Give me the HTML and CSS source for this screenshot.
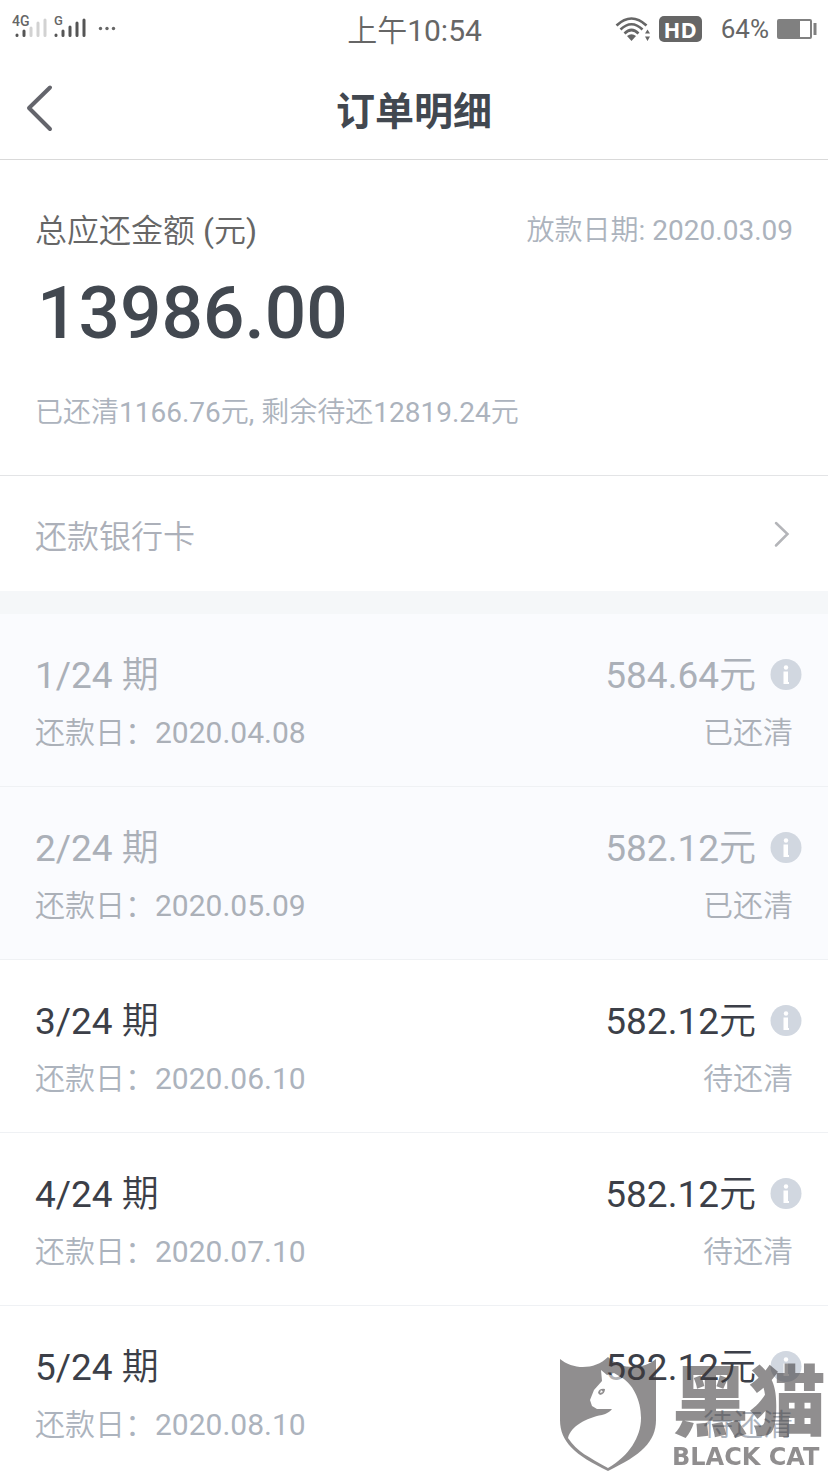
FILE: index.html
```html
<!DOCTYPE html>
<html lang="zh-CN">
<head>
<meta charset="utf-8">
<meta name="viewport" content="width=device-width, initial-scale=1">
<title>订单明细</title>
<link rel="stylesheet" href="styles.css">
</head>
<body>
<svg class="defs" aria-hidden="true">
  <symbol id="info" viewBox="0 0 32 32">
    <circle cx="16" cy="15.500" r="15.5" fill="#d1d7e0"/>
    <circle cx="16" cy="8.500" r="2.200" fill="#fff"/>
    <path d="M13.500 12.500H18V23H19V25H13.500Z" fill="#fff"/>
  </symbol>
</svg>
<div class="app">
  <div class="status">
    <div class="status-left">
      <svg width="106" height="30" viewBox="0 0 106 30" aria-label="信号">
        <g font-family="Roboto, sans-serif" font-size="14" font-weight="500" fill="#666">
          <text x="0" y="12">4G</text>
          <text x="42" y="11" font-size="13">G</text>
        </g>
        <g stroke-width="3" stroke-linecap="round" stroke="#555">
          <path d="M5 21V21.500M12 17V21.500"/>
          <path d="M19 14V21.500M26 9V21.500M33 6V21.500" stroke="#d2d2d2"/>
          <path d="M44 21V21.500M51 17V21.500M58 13V21.500M65 9V21.500M72 6V21.500"/>
        </g>
        <g fill="#666"><circle cx="88.500" cy="14.500" r="1.700"/><circle cx="95" cy="14.500" r="1.700"/><circle cx="101.500" cy="14.500" r="1.700"/></g>
      </svg>
    </div>
    <time class="clock">上午10:54</time>
    <div class="status-right">
      <svg width="36" height="26" viewBox="0 0 36 26" aria-label="无线网络">
        <g fill="none" stroke="#666" stroke-width="2.600">
          <path d="M1.500 9.500Q16.500 -4.500 31.500 9.500"/>
          <path d="M5.500 13.500Q16.500 3 27.500 13.500"/>
          <path d="M9.500 17.500Q16.500 10.500 23.500 17.500"/>
        </g>
        <path d="M12 20Q16.500 16.500 21 20L16.500 25Z" fill="#666"/>
        <path d="M30 17.500L32.500 13.500L35 17.500ZM30 20.500L32.500 25L35 20.500Z" fill="#666"/>
      </svg>
      <span class="hd">HD</span>
      <span class="percent">64%</span>
      <svg width="40" height="20" viewBox="0 0 40 20" aria-label="电量">
        <rect x="1" y="1" width="33" height="18" rx="1" fill="#fff" stroke="#808080" stroke-width="2"/>
        <path d="M1 1H23V19H1ZM36.500 4H39.500V16H36.500Z" fill="#808080"/>
      </svg>
    </div>
  </div>

  <header class="nav">
    <button class="back" type="button" aria-label="返回">
      <svg width="30" height="50" viewBox="0 0 30 50"><path d="M26 4.500L5 25L26 46" fill="none" stroke="#64656c" stroke-width="4" stroke-linecap="round" stroke-linejoin="round"/></svg>
    </button>
    <h1>订单明细</h1>
  </header>

  <main class="content">
    <section class="summary">
      <div class="summary-top">
        <span class="label">总应还金额 (元)</span>
        <span class="loan-date">放款日期: 2020.03.09</span>
      </div>
      <div class="total">13986.00</div>
      <p class="progress">已还清1166.76元, 剩余待还12819.24元</p>
    </section>

    <a class="bank" href="#bank">
      <span>还款银行卡</span>
      <svg width="16" height="28" viewBox="0 0 16 28"><path d="M2 3L13.500 14L2 25.500" fill="none" stroke="#b4b5b9" stroke-width="2.500" stroke-linecap="round"/></svg>
    </a>

    <ul class="plan">
      <li class="term paid">
        <div class="line main"><span>1/24 期</span><span class="amount">584.64元<button type="button" aria-label="第1期说明"><svg><use href="#info"/></svg></button></span></div>
        <div class="line sub"><span>还款日：2020.04.08</span><span>已还清</span></div>
      </li>
      <li class="term paid">
        <div class="line main"><span>2/24 期</span><span class="amount">582.12元<button type="button" aria-label="第2期说明"><svg><use href="#info"/></svg></button></span></div>
        <div class="line sub"><span>还款日：2020.05.09</span><span>已还清</span></div>
      </li>
      <li class="term">
        <div class="line main"><span>3/24 期</span><span class="amount">582.12元<button type="button" aria-label="第3期说明"><svg><use href="#info"/></svg></button></span></div>
        <div class="line sub"><span>还款日：2020.06.10</span><span>待还清</span></div>
      </li>
      <li class="term">
        <div class="line main"><span>4/24 期</span><span class="amount">582.12元<button type="button" aria-label="第4期说明"><svg><use href="#info"/></svg></button></span></div>
        <div class="line sub"><span>还款日：2020.07.10</span><span>待还清</span></div>
      </li>
      <li class="term">
        <div class="line main"><span>5/24 期</span><span class="amount">582.12元<button type="button" aria-label="第5期说明"><svg><use href="#info"/></svg></button></span></div>
        <div class="line sub"><span>还款日：2020.08.10</span><span>待还清</span></div>
      </li>
    </ul>
  </main>
</div>

<div class="watermark">
  <svg width="98" height="114" viewBox="0 0 98 114" aria-hidden="true">
    <path class="cat" d="M42 26L44 13L51 18L60 19C74 28 82 43 82 61C82 80 70 99 49 109C30 98 18 93 9 80C12 67 27 61 43 58Q50 56 53 51H37L32 48L30 43L36 32Z"/>
    <path class="shield" fill-rule="evenodd" d="M1 2C14 13 36 13 49 0C62 13 84 13 97 2V63C97 85 82 98 49 114C16 98 1 85 1 63ZM43 24L35 33L31 43L33 49L38 52H53Q50 56 43 58C27 61 12 69 9 81C18 95 30 100 49 111C70 99 82 80 82 61C82 43 74 26 60 19L55 16L48 18L42 13Z"/>
    <path class="shield" fill-rule="evenodd" d="M39 36Q40 31 46 32Q46 37 41 38ZM42 33L41 36L44 35Z"/>
  </svg>
  <div class="brand"><span class="brand-cn">黑猫</span><span class="brand-en">BLACK CAT</span></div>
</div>
</body>
</html>
```

FILE: styles.css
```css
* { box-sizing: border-box; }

body {
  margin: 0;
  background: #fff;
  color: #3c3f48;
  font-family: Roboto, "Noto Sans CJK SC DemiLight", "Noto Sans CJK SC Light", "Noto Sans CJK SC", sans-serif;
}

button {
  padding: 0;
  border: 0;
  background: none;
}

svg { display: block; }

.defs {
  position: absolute;
  width: 0;
  height: 0;
}

.app {
  display: flex;
  flex-direction: column;
  height: 100vh;
}

.status {
  display: grid;
  grid-template-columns: 1fr auto 1fr;
  align-items: center;
  height: 58px;
  padding: 0 11px 0 12px;
  color: #666;
}

.clock {
  padding-top: 3px;
  font-size: 30px;
  line-height: 36px;
}

.status-right {
  display: flex;
  justify-content: flex-end;
  align-items: center;
}

.hd {
  margin: 0 19px 0 8px;
  padding: 0 5px;
  border-radius: 5px;
  background: #666;
  color: #fff;
  font: 700 22px/26px "Open Sans", sans-serif;
}

.percent {
  margin-right: 8px;
  font-size: 26px;
}

.nav {
  display: grid;
  grid-template-columns: 1fr auto 1fr;
  align-items: center;
  height: 102px;
  padding: 0 24px 2px;
  border-bottom: 1px solid #d9d9d9;
}

.back { justify-self: start; }

.nav h1 {
  margin: 0;
  color: #424850;
  font: 700 39px/52px "Noto Sans CJK SC", sans-serif;
}

.content {
  flex: 1;
  min-height: 0;
  overflow-y: auto;
  scrollbar-width: none;
}

.summary {
  padding: 49px 35px 42px;
  border-bottom: 1px solid #e3e4e6;
}

.summary-top {
  display: flex;
  justify-content: space-between;
  align-items: center;
  line-height: 44px;
}

.label {
  color: #666;
  font-size: 32px;
}

.loan-date, .progress {
  color: #acb3bd;
  font-size: 28px;
}

.total {
  margin-top: 20px;
  padding-left: 2px;
  color: #424850;
  font-size: 73px;
  font-weight: 500;
  line-height: 80px;
}

.progress {
  margin: 40px 0 0;
  line-height: 40px;
}

.bank {
  display: flex;
  justify-content: space-between;
  align-items: center;
  height: 115px;
  padding: 0 38px 0 35px;
  color: #acb0b9;
  font-size: 32px;
  text-decoration: none;
}

.plan {
  margin: 0;
  padding: 0;
  border-top: 23px solid #f5f7f9;
  list-style: none;
}

.term {
  padding: 40px 26px 33px 35px;
  border-bottom: 1px solid #eff1f4;
}

.paid { background: #fafbfe; }

.line {
  display: flex;
  justify-content: space-between;
  align-items: center;
}

.main {
  font-size: 37px;
  line-height: 44px;
}

.sub {
  margin-top: 15px;
  padding-right: 9px;
  color: #acb3bd;
  font-size: 30px;
  line-height: 40px;
}

.paid .main, .paid .sub { color: #abb0b8; }

.amount {
  display: flex;
  align-items: center;
  gap: 14px;
}

.amount button { margin-bottom: 3px; }

.amount svg {
  width: 32px;
  height: 32px;
}

.watermark {
  position: fixed;
  right: 2px;
  bottom: 1px;
  display: flex;
  align-items: flex-end;
  gap: 15px;
  color: rgba(60, 57, 58, 0.57);
}

.shield { fill: currentColor; }

.cat {
  fill: #fff;
  fill-opacity: 0.6;
}

.brand {
  display: flex;
  flex-direction: column;
}

.brand-cn {
  margin-bottom: 8px;
  font: 900 77px/76px "Noto Sans CJK SC", sans-serif;
}

.brand-en {
  font: 700 24px/28px "DejaVu Sans", sans-serif;
}
```
